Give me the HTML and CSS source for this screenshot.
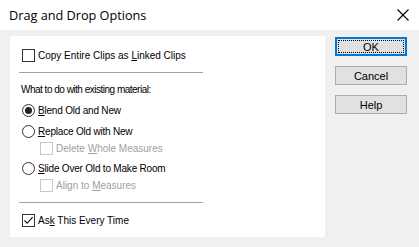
FILE: index.html
```html
<!DOCTYPE html>
<html lang="en">
<head>
  <meta charset="UTF-8" />
  <title>Drag and Drop Options</title>
  <link rel="stylesheet" href="styles.css">
</head>
<body>
  <div class="dialog">
    <div class="titlebar">
      <span class="title">Drag and Drop Options</span>
      <svg class="close" width="12" height="12" viewBox="0 0 12 12">
        <path d="M0.5 0.5 L11.5 11.5 M11.5 0.5 L0.5 11.5" stroke="#000" stroke-width="1.1" fill="none" />
      </svg>
    </div>

    <div class="main">
      <div class="panel">
        <div class="row r-copy">
          <span class="box"></span>
          <span>Copy Entire Clips as <u>L</u>inked Clips</span>
        </div>

        <div class="sep s-first"></div>

        <div class="row r-what">What to do with existing material:</div>

        <div class="row opt r-blend">
          <span class="radio on"></span>
          <span><u>B</u>lend Old and New</span>
        </div>
        <div class="row opt r-replace">
          <span class="radio"></span>
          <span><u>R</u>eplace Old with New</span>
        </div>
        <div class="row sub r-delete">
          <span class="box off"></span>
          <span>Delete <u>W</u>hole Measures</span>
        </div>
        <div class="row opt r-slide">
          <span class="radio"></span>
          <span><u>S</u>lide Over Old to Make Room</span>
        </div>
        <div class="row sub r-align">
          <span class="box off"></span>
          <span>Align to <u>M</u>easures</span>
        </div>

        <div class="sep s-second"></div>

        <div class="row r-ask">
          <span class="box">
            <svg width="11" height="11" viewBox="0 0 11 11">
              <path d="M1.5 5.5 L4.2 8.3 L9.6 2.2" stroke="#000" stroke-width="1.1" fill="none" />
            </svg>
          </span>
          <span>As<u>k</u> This Every Time</span>
        </div>
      </div>

      <div class="buttons">
        <button class="default"><span class="focus">OK</span></button>
        <button>Cancel</button>
        <button>Help</button>
      </div>
    </div>
  </div>
</body>
</html>
```

FILE: styles.css
```css
body {
  margin: 0;
  font-family: "Liberation Sans", Arial, sans-serif;
  font-size: 10px;
  color: #000;
  background: #f0f0f0;
}

.dialog {
  width: 419px;
  height: 247px;
  overflow: hidden;
}

.titlebar {
  height: 30px;
  background: #fff;
  display: flex;
  align-items: center;
  justify-content: space-between;
  padding: 0 9px 0 9px;
}

.title {
  font-family: "Open Sans", "Noto Sans", sans-serif;
  font-size: 12.7px;
  color: #000;
}

.close {
  margin-right: 1px;
}

.main {
  display: flex;
  align-items: flex-start;
  padding: 6px 0 0 10px;
  height: 211px;
}

.panel {
  width: 315px;
  height: 190px;
  background: #fff;
  padding-top: 11px;
  box-sizing: content-box;
}

.row {
  height: 16px;
  display: flex;
  align-items: center;
  gap: 3px;
  padding-left: 12px;
  white-space: nowrap;
}

.row.sub {
  padding-left: 30px;
  color: #a0a0a0;
}

.row.opt {
  letter-spacing: -0.2px;
}

.r-what { margin-top: 8px; padding-left: 11px; letter-spacing: -0.5px; }
.r-blend { margin-top: 5px; }
.r-replace { margin-top: 5px; }
.r-delete { margin-top: 1px; }
.r-slide { margin-top: 4px; }
.r-align { margin-top: 1px; }
.r-ask { margin-top: 9px; }

.sep {
  height: 1px;
  width: 184px;
  margin-left: 9px;
  background: #a0a0a0;
}

.s-first { margin-top: 9px; }
.s-second { margin-top: 9px; }

.box {
  width: 11px;
  height: 11px;
  border: 1px solid #333;
  background: #fff;
  display: flex;
  align-items: center;
  justify-content: center;
  flex: none;
}

.box.off {
  border-color: #c8c8c8;
}

.radio {
  width: 11px;
  height: 11px;
  border: 1px solid #333;
  border-radius: 50%;
  background: #fff;
  display: flex;
  align-items: center;
  justify-content: center;
  flex: none;
}

.radio.on::after {
  content: "";
  width: 7px;
  height: 7px;
  border-radius: 50%;
  background: #222;
}

.buttons {
  display: flex;
  flex-direction: column;
  gap: 10px;
  margin-left: 10px;
  padding-top: 1px;
}

button {
  width: 72px;
  height: 19px;
  padding: 0;
  font-family: "Liberation Sans", Arial, sans-serif;
  font-size: 11px;
  color: #000;
  background: #e1e1e1;
  border: 1px solid #adadad;
  display: flex;
  align-items: center;
  justify-content: center;
}

button.default {
  border: 2px solid #0078d7;
}

.focus {
  display: flex;
  align-items: center;
  justify-content: center;
  width: 64px;
  height: 11px;
  border: 1px dotted #000;
}
```
